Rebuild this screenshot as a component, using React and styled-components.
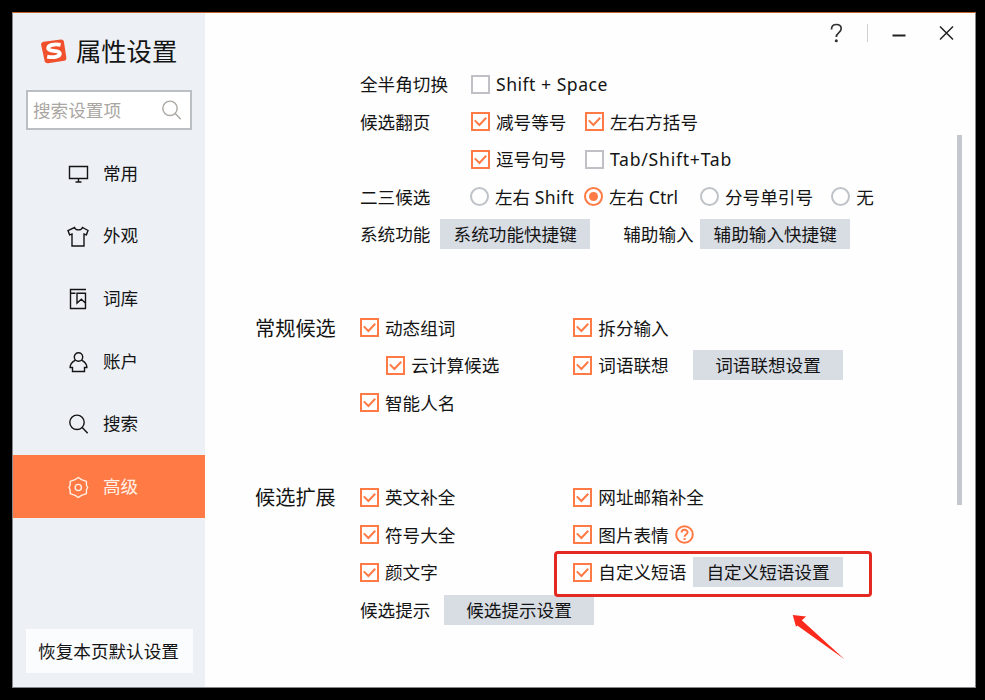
import React from "react";
import styled, { createGlobalStyle } from "styled-components";

const ORANGE = "#ff7a45";

const GlobalStyle = createGlobalStyle`
  * { box-sizing: border-box; }
  body {
    margin: 0;
    background: #000;
    color: #141414;
    font-family: "Noto Sans", "Noto Sans CJK SC", sans-serif;
    font-size: 17.6px;
    line-height: 24px;
  }
`;

const Desktop = styled.div`
  width: 985px;
  height: 700px;
  padding: 12px 9px 12px 12px;
  background: #000;
  overflow: hidden;
`;

const Window = styled.div`
  display: flex;
  height: 676px;
  border: 1px solid #85878b;
  border-top-color: #c4622f;
  background: #fefefe;
`;

const Sidebar = styled.aside`
  display: flex;
  flex-direction: column;
  width: 192px;
  background: #edf1f6;
`;

const Brand = styled.h1`
  display: flex;
  align-items: center;
  gap: 9px;
  height: 77px;
  margin: 0;
  padding: 0 0 1px 27px;
  font-size: 25.3px;
  font-weight: 400;
  white-space: nowrap;
`;

const SearchBox = styled.div`
  display: flex;
  align-items: center;
  justify-content: space-between;
  width: 166px;
  height: 40px;
  margin-left: 13px;
  padding: 0 8px 1px 5px;
  border: 2px solid #b9bfc3;
  background: #fff;
  color: #aaa6a2;
`;

const Nav = styled.nav`
  display: flex;
  flex-direction: column;
  margin-top: 12px;
`;

const NavItem = styled.a`
  display: flex;
  align-items: center;
  gap: 14px;
  height: 62.6px;
  padding: 0 0 1px 54px;
  background: ${(p) => (p.$active ? ORANGE : "transparent")};
  color: ${(p) => (p.$active ? "#fff0e6" : "#141414")};
  svg { margin-top: 2px; }
`;

const ResetButton = styled.button`
  width: 167px;
  height: 44px;
  margin: auto 0 14px 13px;
  padding: 0 2px 0 0;
  border: 0;
  background: #fbfcfd;
  color: #141414;
  font: inherit;
`;

const Main = styled.main`
  display: flex;
  flex: 1;
  flex-direction: column;
`;

const TitleBar = styled.header`
  display: flex;
  align-items: center;
  justify-content: flex-end;
  height: 40px;
  padding-right: 20px;
`;

const WindowControls = styled.div`
  display: flex;
  align-items: center;
`;

const Divider = styled.span`
  width: 1px;
  height: 18px;
  margin: 0 23px 0 24px;
  background: #d0d0d0;
`;

const ControlGap = styled.span`
  width: 31px;
`;

const Body = styled.div`
  display: flex;
  justify-content: space-between;
  flex: 1;
  padding: 12.7px 13px 0 50px;
`;

const Sections = styled.div`
  display: flex;
  flex-direction: column;
  gap: 56px;
`;

const Section = styled.section`
  display: grid;
  grid-template-columns: 105px 520px;
  &:last-child { margin-top: 0.7px; }
`;

const SectionTitle = styled.h2`
  margin: 0;
  font-size: 20.2px;
  font-weight: 400;
  line-height: 39px;
`;

const Row = styled.div`
  display: flex;
  align-items: center;
  height: 37.5px;
  padding-left: ${(p) => p.$indent || 0}px;
  white-space: nowrap;
`;

const Cell = styled.div`
  display: flex;
  align-items: center;
  flex: none;
  width: ${(p) => (p.$w ? `${p.$w}px` : "auto")};
`;

const Option = styled.label`
  display: flex;
  align-items: center;
  gap: 6px;
`;

const Check = styled.span`
  display: flex;
  width: 19px;
  height: 19px;
  border: 2px solid ${(p) => (p.$on ? ORANGE : "#bfc1c6")};
  background: #fff;
`;

const Radio = styled.span`
  display: flex;
  align-items: center;
  justify-content: center;
  width: 19px;
  height: 19px;
  border: 2px solid ${(p) => (p.$on ? ORANGE : "#bfc3c8")};
  border-radius: 50%;
  &::after {
    content: "";
    width: 9px;
    height: 9px;
    border-radius: 50%;
    background: ${(p) => (p.$on ? ORANGE : "transparent")};
  }
`;

const Latin = styled.span`
  letter-spacing: ${(p) => p.$track || 0}px;
`;

const Button = styled.button`
  width: 150px;
  height: 30px;
  padding: 0;
  border: 0;
  background: #d8dde4;
  color: #141414;
  font: inherit;
`;

const HelpMark = styled.span`
  display: flex;
  margin-left: 6px;
`;

const Highlighted = styled.div`
  display: flex;
  align-items: center;
  position: relative;
`;

const HighlightFrame = styled.div`
  position: absolute;
  left: -19.7px;
  top: -6px;
  width: 318px;
  height: 46px;
  border: 3px solid #e32a22;
  border-radius: 4px;
  pointer-events: none;
`;

const Arrow = styled.svg`
  position: absolute;
  left: 219px;
  top: 57px;
`;

const Scrollbar = styled.div`
  width: 5px;
  height: 370px;
  margin-top: 69.3px;
  background: #c5c7ce;
`;

function Icon({ size = 22, w = 1.4, children }) {
  return (
    <svg width={size} height={size} viewBox="0 0 22 22" fill="none" stroke="currentColor" strokeWidth={w}>
      {children}
    </svg>
  );
}

const icons = {
  monitor: <path d="M2.5 3.5h18v12h-18zM11.5 15.5v3.5M8.5 19h6" />,
  shirt: <path d="M7.5 2.5c1 3.1 7 3.1 8 0l5.5 3-1.6 4.3-2.4-.8v12H5V9l-2.4.8L1 5.5z" />,
  book: <path d="M19 1.5H3.5v19H19M3.5 5.2h5M18.5 5.2v15.3M10 15.2v-10h8.5v10l-4.2-4z" />,
  user: <><circle cx="11.5" cy="6" r="4.2" /><path d="M8.5 9.2C5 11 3.1 13 3.1 16.5h2.4v4h12v-4h2.4c0-3.5-1.9-5.5-5.4-7.3" /></>,
  search: <><circle cx="10" cy="9.3" r="7.2" /><path d="M15.2 14.5l5.5 5.8" /></>,
  gear: <><path d="M11.3 1.5l3.2 2.2 4.9 1.6.1 4.2 1.2 2-1.2 2-.1 4.2-4.9 1.6-3.2 2.2-3.2-2.2-4.9-1.6-.1-4.2-1.2-2 1.2-2 .1-4.2 4.9-1.6z" strokeLinejoin="round" /><circle cx="11.3" cy="11.5" r="3.1" /></>,
};

function Logo() {
  return (
    <svg width="27" height="25" viewBox="0 0 27 25">
      <path d="M3.5 2.8L21 .5q2.4-.2 2.9 2.1l2.5 16.3q.2 2.4-2.1 2.9L8 24.3q-2.6.3-3.3-2.1L1.1 5.6Q.9 3.3 3.5 2.8z" fill="#f0502b" />
      <path d="M20.6 5.8C14.8 4.7 8 5.7 8.2 9.4c.2 3.8 11.7 1.2 11.6 5.2-.1 3.4-7 4.2-12.6 3" fill="none" stroke="#fff" strokeWidth="3.9" />
    </svg>
  );
}

function CheckOption({ on = true, children }) {
  return (
    <Option>
      <Check $on={on}>
        {on && (
          <svg width="15" height="15" viewBox="0 0 15 15" fill="none" stroke={ORANGE} strokeWidth="2">
            <path d="M1.8 6.4l4.6 4.6 6.8-7.2" />
          </svg>
        )}
      </Check>
      <span>{children}</span>
    </Option>
  );
}

function RadioOption({ on, children }) {
  return (
    <Option>
      <Radio $on={on} />
      <span>{children}</span>
    </Option>
  );
}

const navItems = [
  ["monitor", "常用"],
  ["shirt", "外观"],
  ["book", "词库"],
  ["user", "账户"],
  ["search", "搜索"],
  ["gear", "高级"],
];

export default function App() {
  return (
    <Desktop>
      <GlobalStyle />
      <Window>
        <Sidebar>
          <Brand><Logo />属性设置</Brand>
          <SearchBox>
            搜索设置项
            <Icon>{icons.search}</Icon>
          </SearchBox>
          <Nav>
            {navItems.map(([icon, label]) => (
              <NavItem key={icon} $active={icon === "gear"}>
                <Icon size={22}>{icons[icon]}</Icon>
                {label}
              </NavItem>
            ))}
          </Nav>
          <ResetButton>恢复本页默认设置</ResetButton>
        </Sidebar>
        <Main>
          <TitleBar>
            <WindowControls>
              <svg width="13" height="20" viewBox="0 0 13 20" fill="none" stroke="#333" strokeWidth="1.7">
                <path d="M1.5 6.5C1.5 3 3.5 1.5 6.3 1.5s4.9 1.6 4.9 4.2c0 3.8-4.9 4-4.9 8.3" />
                <circle cx="6.3" cy="17.7" r=".7" fill="#333" />
              </svg>
              <Divider />
              <svg width="16" height="16" viewBox="0 0 16 16" stroke="#222" strokeWidth="2">
                <path d="M1.5 10.5h13" />
              </svg>
              <ControlGap />
              <svg width="17" height="16" viewBox="0 0 17 16" stroke="#222" strokeWidth="1.5">
                <path d="M2 1.5l13 13M15 1.5l-13 13" />
              </svg>
            </WindowControls>
          </TitleBar>
          <Body>
            <Sections>
              <Section>
                <span />
                <div>
                  <Row>
                    <Cell $w={111}>全半角切换</Cell>
                    <CheckOption on={false}><Latin $track={0.5}>Shift + Space</Latin></CheckOption>
                  </Row>
                  <Row>
                    <Cell $w={111}>候选翻页</Cell>
                    <Cell $w={114}><CheckOption>减号等号</CheckOption></Cell>
                    <CheckOption>左右方括号</CheckOption>
                  </Row>
                  <Row $indent={111}>
                    <Cell $w={114}><CheckOption>逗号句号</CheckOption></Cell>
                    <CheckOption on={false}><Latin $track={0.75}>Tab/Shift+Tab</Latin></CheckOption>
                  </Row>
                  <Row>
                    <Cell $w={110}>二三候选</Cell>
                    <Cell $w={114}><RadioOption>左右 <Latin $track={0.4}>Shift</Latin></RadioOption></Cell>
                    <Cell $w={116}><RadioOption on>左右 <Latin>Ctrl</Latin></RadioOption></Cell>
                    <Cell $w={131.3}><RadioOption>分号单引号</RadioOption></Cell>
                    <RadioOption>无</RadioOption>
                  </Row>
                  <Row>
                    <Cell $w={80.2}>系统功能</Cell>
                    <Cell $w={183}><Button>系统功能快捷键</Button></Cell>
                    <Cell $w={77}>辅助输入</Cell>
                    <Button>辅助输入快捷键</Button>
                  </Row>
                </div>
              </Section>
              <Section>
                <SectionTitle>常规候选</SectionTitle>
                <div>
                  <Row>
                    <Cell $w={213.3}><CheckOption>动态组词</CheckOption></Cell>
                    <CheckOption>拆分输入</CheckOption>
                  </Row>
                  <Row $indent={26.3}>
                    <Cell $w={187}><CheckOption>云计算候选</CheckOption></Cell>
                    <Cell $w={119.7}><CheckOption>词语联想</CheckOption></Cell>
                    <Button>词语联想设置</Button>
                  </Row>
                  <Row><CheckOption>智能人名</CheckOption></Row>
                </div>
              </Section>
              <Section>
                <SectionTitle>候选扩展</SectionTitle>
                <div>
                  <Row>
                    <Cell $w={213.3}><CheckOption>英文补全</CheckOption></Cell>
                    <CheckOption>网址邮箱补全</CheckOption>
                  </Row>
                  <Row>
                    <Cell $w={213.3}><CheckOption>符号大全</CheckOption></Cell>
                    <CheckOption>图片表情</CheckOption>
                    <HelpMark>
                      <svg width="19" height="19" viewBox="0 0 19 19" fill="none" stroke={ORANGE} strokeWidth="2">
                        <circle cx="9.5" cy="9.5" r="8.3" />
                        <path d="M6.6 7.6c0-3.7 6-3.6 6-.3 0 2.2-3 2.2-3 4.4M9.6 13v2" />
                      </svg>
                    </HelpMark>
                  </Row>
                  <Row>
                    <Cell $w={213.3}><CheckOption>颜文字</CheckOption></Cell>
                    <Highlighted>
                      <Cell $w={119.7}><CheckOption>自定义短语</CheckOption></Cell>
                      <Button>自定义短语设置</Button>
                      <HighlightFrame />
                      <Arrow width="54" height="48" viewBox="0 0 54 48">
                        <path d="M.8 1l13.4 1.4-4.4 3.8L52.5 45.2 5.3 11.5 4 12.8z" fill="#fb2a1c" />
                      </Arrow>
                    </Highlighted>
                  </Row>
                  <Row>
                    <Cell $w={84}>候选提示</Cell>
                    <Button>候选提示设置</Button>
                  </Row>
                </div>
              </Section>
            </Sections>
            <Scrollbar />
          </Body>
        </Main>
      </Window>
    </Desktop>
  );
}
